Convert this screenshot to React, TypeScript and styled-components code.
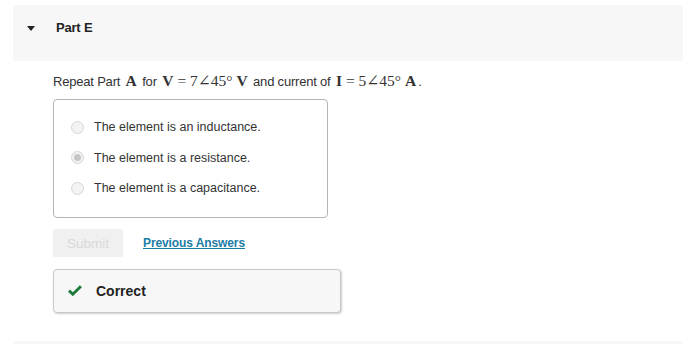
import React from "react";
import styled, { createGlobalStyle } from "styled-components";

const GlobalStyle = createGlobalStyle`
  body {
    margin: 0;
    background: #fff;
    font-family: "Liberation Sans", Arial, sans-serif;
    color: #222;
  }
`;

const Page = styled.div`
  padding: 5px 0 0 13px;
  width: 670px;
`;

const PartHeader = styled.div`
  box-sizing: border-box;
  display: flex;
  align-items: center;
  height: 56px;
  background: #f7f7f7;
  padding: 0 0 10px 14px;
  gap: 21px;
`;

const Caret = styled.span`
  width: 0;
  height: 0;
  border-left: 4px solid transparent;
  border-right: 4px solid transparent;
  border-top: 5px solid #222;
  margin-top: 1px;
`;

const PartTitle = styled.h2`
  margin: 0;
  font-size: 13px;
  line-height: 16px;
  font-weight: bold;
  color: #222;
  letter-spacing: -0.2px;
`;

const Body = styled.div`
  padding-left: 40px;
`;

const Question = styled.p`
  margin: 10px 0 7px;
  font-size: 13px;
  line-height: 20px;
  color: #333;
  letter-spacing: -0.2px;
`;

const M = styled.span<{ $bold?: boolean }>`
  font-family: "Liberation Serif", "DejaVu Serif", serif;
  font-size: 15.5px;
  font-weight: ${p => (p.$bold ? "bold" : "normal")};
  letter-spacing: 0;
  margin: 0 2px;
`;

const Options = styled.div`
  box-sizing: border-box;
  width: 275px;
  height: 119px;
  border: 1px solid #b5b5b5;
  border-radius: 4px;
  padding: 12px 0 0 17px;
`;

const Option = styled.label`
  display: flex;
  align-items: center;
  height: 30.5px;
  gap: 10px;
  font-size: 12.5px;
  color: #333;
`;

const Radio = styled.span<{ $checked?: boolean }>`
  box-sizing: border-box;
  width: 13px;
  height: 13px;
  border-radius: 50%;
  border: 1px solid #d6d6d6;
  background: #f3f3f3;
  display: flex;
  align-items: center;
  justify-content: center;
  &::after {
    content: "";
    width: 7px;
    height: 7px;
    border-radius: 50%;
    background: ${p => (p.$checked ? "#c6c6c6" : "transparent")};
  }
`;

const Actions = styled.div`
  display: flex;
  align-items: center;
  gap: 20px;
  margin-top: 11px;
`;

const SubmitButton = styled.button`
  width: 70px;
  height: 28px;
  border: none;
  border-radius: 2px;
  background: #f0f0f0;
  color: #d9d9d9;
  font-family: "Liberation Sans", Arial, sans-serif;
  font-size: 13.5px;
  padding: 0;
`;

const PrevLink = styled.a`
  font-size: 12px;
  font-weight: bold;
  color: #1a7ca6;
  text-decoration: underline;
  letter-spacing: -0.1px;
  cursor: pointer;
`;

const Feedback = styled.div`
  box-sizing: border-box;
  margin-top: 12px;
  width: 288px;
  height: 44px;
  background: #f7f7f7;
  border: 1px solid #c9c9c9;
  border-radius: 4px;
  box-shadow: 1px 1px 2px rgba(0, 0, 0, 0.2);
  display: flex;
  align-items: center;
  padding: 0 0 1px 14px;
  gap: 14px;
`;

const FeedbackText = styled.span`
  font-size: 14px;
  font-weight: bold;
  color: #222;
`;

const BottomRule = styled.div`
  margin-top: 28px;
  height: 3px;
  background: #f7f7f7;
`;

const CheckIcon = () => (
  <svg width="14" height="11" viewBox="0 0 14 11">
    <path d="M1 5.6 L4.8 9.2 L12.9 1.2" fill="none" stroke="#1d7b3a" strokeWidth="2.9" />
  </svg>
);

const options = [
  { text: "The element is an inductance.", checked: false },
  { text: "The element is a resistance.", checked: true },
  { text: "The element is a capacitance.", checked: false },
];

export default function App() {
  return (
    <Page>
      <GlobalStyle />
      <PartHeader>
        <Caret />
        <PartTitle>Part E</PartTitle>
      </PartHeader>
      <Body>
        <Question>
          Repeat Part <M $bold>A</M> for <M $bold>V</M>
          <M>= 7∠45°</M>
          <M $bold>V</M> and current of <M $bold>I</M>
          <M>= 5∠45°</M>
          <M $bold>A</M>.
        </Question>
        <Options>
          {options.map(o => (
            <Option key={o.text}>
              <Radio $checked={o.checked} />
              {o.text}
            </Option>
          ))}
        </Options>
        <Actions>
          <SubmitButton disabled>Submit</SubmitButton>
          <PrevLink>Previous Answers</PrevLink>
        </Actions>
        <Feedback>
          <CheckIcon />
          <FeedbackText>Correct</FeedbackText>
        </Feedback>
      </Body>
      <BottomRule />
    </Page>
  );
}
